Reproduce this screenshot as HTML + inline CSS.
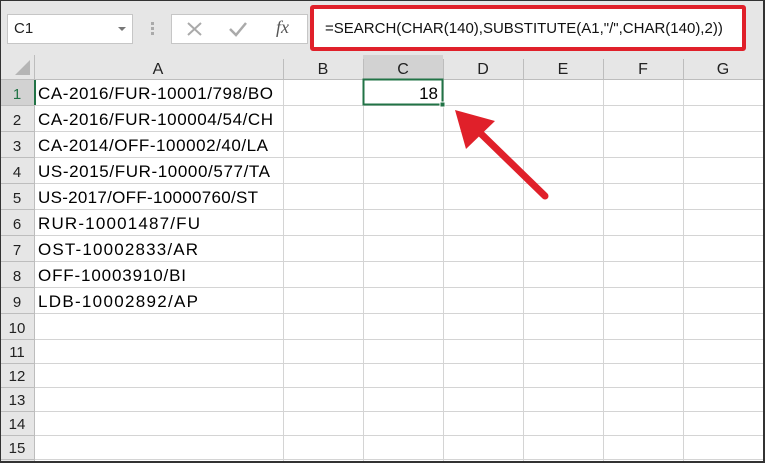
<!DOCTYPE html>
<html><head><style>
body{margin:0;width:765px;height:463px;overflow:hidden;background:#fff;font-family:"Liberation Sans",sans-serif;position:relative}
.abs{position:absolute}
.tb{left:0;top:0;width:765px;height:55px;background:#e6e6e6;border-top:1px solid #333;box-sizing:border-box}
.box{background:#fff;border:1px solid #c6c6c6;box-sizing:border-box}
.txt{font-size:16px;color:#000;white-space:nowrap}
</style></head><body>
<div class="abs tb"></div>
<div class="abs box" style="left:7px;top:14px;width:126px;height:30px"></div>
<div class="abs txt" style="left:14px;top:20px;font-size:15px;color:#222">C1</div>
<div class="abs" style="left:118px;top:27px;width:0;height:0;border-left:4px solid transparent;border-right:4px solid transparent;border-top:4px solid #777"></div>
<div class="abs" style="left:151px;top:22px;width:3px;height:3px;background:#aaa;box-shadow:0 5px 0 #aaa,0 10px 0 #aaa"></div>
<div class="abs box" style="left:171px;top:14px;width:137px;height:30px"></div>
<svg class="abs" style="left:185px;top:20px" width="20" height="18"><path d="M3 3L16 15M16 3L3 15" stroke="#aaa" stroke-width="2"/></svg>
<svg class="abs" style="left:228px;top:20px" width="20" height="18"><path d="M2 9L8 15L18 3" stroke="#aaa" stroke-width="2.5" fill="none"/></svg>
<div class="abs" style="left:276px;top:17px;font-family:'Liberation Serif',serif;font-style:italic;font-size:18px;color:#555">fx</div>
<div class="abs" style="left:310px;top:5px;width:436px;height:46px;border:4px solid #e0202a;border-radius:3px;box-sizing:border-box;background:#fff"></div>
<div class="abs txt" style="left:325px;top:20px;font-size:15px;color:#111">=SEARCH(CHAR(140),SUBSTITUTE(A1,"/",CHAR(140),2))</div>
<div class="abs" style="left:0;top:0;width:1px;height:463px;background:#333"></div>
<div class="abs" style="left:763px;top:0;width:2px;height:463px;background:#333"></div>
<div class="abs" style="left:0;top:461px;width:765px;height:2px;background:#333"></div>
<svg class="abs" style="left:0;top:55px" width="765" height="406">
<rect x="1" y="0" width="762" height="24" fill="#e6e6e6"/>
<rect x="363" y="0" width="80" height="24" fill="#d2d2d2"/>
<rect x="1" y="24" width="33" height="382" fill="#e6e6e6"/>
<rect x="1" y="24" width="33" height="26" fill="#d2d2d2"/>
<polygon points="15,20 30,20 30,5" fill="#b5b5b5"/>
<g stroke="#d4d4d4" stroke-width="1">
<line x1="34" y1="50.5" x2="763" y2="50.5"/><line x1="34" y1="76.5" x2="763" y2="76.5"/><line x1="34" y1="102.5" x2="763" y2="102.5"/><line x1="34" y1="128.5" x2="763" y2="128.5"/><line x1="34" y1="154.5" x2="763" y2="154.5"/><line x1="34" y1="180.5" x2="763" y2="180.5"/><line x1="34" y1="206.5" x2="763" y2="206.5"/><line x1="34" y1="232.5" x2="763" y2="232.5"/><line x1="34" y1="258.5" x2="763" y2="258.5"/><line x1="34" y1="284.5" x2="763" y2="284.5"/><line x1="34" y1="308.5" x2="763" y2="308.5"/><line x1="34" y1="332.5" x2="763" y2="332.5"/><line x1="34" y1="356.5" x2="763" y2="356.5"/><line x1="34" y1="380.5" x2="763" y2="380.5"/><line x1="34" y1="404.5" x2="763" y2="404.5"/>
<line x1="283.5" y1="24" x2="283.5" y2="406"/><line x1="363.5" y1="24" x2="363.5" y2="406"/><line x1="443.5" y1="24" x2="443.5" y2="406"/><line x1="523.5" y1="24" x2="523.5" y2="406"/><line x1="603.5" y1="24" x2="603.5" y2="406"/><line x1="683.5" y1="24" x2="683.5" y2="406"/>
</g>
<g stroke="#bdbdbd"><line x1="1" y1="24.5" x2="763" y2="24.5"/><line x1="34.5" y1="0" x2="34.5" y2="406"/>
<line x1="283.5" y1="4" x2="283.5" y2="24"/><line x1="363.5" y1="4" x2="363.5" y2="24"/><line x1="443.5" y1="4" x2="443.5" y2="24"/><line x1="523.5" y1="4" x2="523.5" y2="24"/><line x1="603.5" y1="4" x2="603.5" y2="24"/><line x1="683.5" y1="4" x2="683.5" y2="24"/>
<line x1="1" y1="50.5" x2="34" y2="50.5"/><line x1="1" y1="76.5" x2="34" y2="76.5"/><line x1="1" y1="102.5" x2="34" y2="102.5"/><line x1="1" y1="128.5" x2="34" y2="128.5"/><line x1="1" y1="154.5" x2="34" y2="154.5"/><line x1="1" y1="180.5" x2="34" y2="180.5"/><line x1="1" y1="206.5" x2="34" y2="206.5"/><line x1="1" y1="232.5" x2="34" y2="232.5"/><line x1="1" y1="258.5" x2="34" y2="258.5"/><line x1="1" y1="284.5" x2="34" y2="284.5"/><line x1="1" y1="308.5" x2="34" y2="308.5"/><line x1="1" y1="332.5" x2="34" y2="332.5"/><line x1="1" y1="356.5" x2="34" y2="356.5"/><line x1="1" y1="380.5" x2="34" y2="380.5"/><line x1="1" y1="404.5" x2="34" y2="404.5"/></g>
<rect x="363.5" y="24.5" width="79" height="25" fill="none" stroke="#217346" stroke-width="2"/>
<rect x="440" y="47" width="5" height="5" fill="#217346" stroke="#fff"/>
<rect x="34" y="25" width="2" height="25" fill="#217346"/>
<g font-family="Liberation Sans" font-size="16" fill="#222" text-anchor="middle">
<text x="158" y="19">A</text><text x="323" y="19">B</text><text x="403" y="19">C</text><text x="483" y="19">D</text><text x="563" y="19">E</text><text x="643" y="19">F</text><text x="723" y="19">G</text>
<g font-size="15"><text x="17" y="44" fill="#217346">1</text><text x="17" y="70">2</text><text x="17" y="96">3</text><text x="17" y="122">4</text><text x="17" y="148">5</text><text x="17" y="174">6</text><text x="17" y="200">7</text><text x="17" y="226">8</text><text x="17" y="252">9</text><text x="17" y="278">10</text><text x="17" y="302">11</text><text x="17" y="326">12</text><text x="17" y="350">13</text><text x="17" y="374">14</text><text x="17" y="398">15</text></g>
</g>
<g font-family="Liberation Sans" font-size="17" fill="#000">
<text x="38" y="44" textLength="235">CA-2016/FUR-10001/798/BO</text>
<text x="38" y="70" textLength="235">CA-2016/FUR-100004/54/CH</text>
<text x="38" y="96" textLength="230">CA-2014/OFF-100002/40/LA</text>
<text x="38" y="122" textLength="232">US-2015/FUR-10000/577/TA</text>
<text x="38" y="148" textLength="220">US-2017/OFF-10000760/ST</text>
<text x="38" y="174" textLength="162">RUR-10001487/FU</text>
<text x="38" y="200" textLength="160">OST-10002833/AR</text>
<text x="38" y="226" textLength="148">OFF-10003910/BI</text>
<text x="38" y="252" textLength="160">LDB-10002892/AP</text>
<text x="438" y="44" text-anchor="end">18</text>
</g>
<line x1="545" y1="141" x2="472" y2="70" stroke="#e0202a" stroke-width="7" stroke-linecap="round"/>
<polygon points="455,55 495,66 466,94" fill="#e0202a"/>
</svg>
</body></html>
